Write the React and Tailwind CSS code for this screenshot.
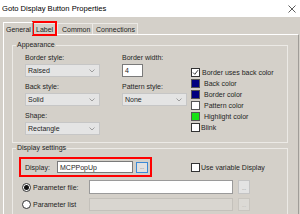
import React from "react"

const Chevron = () => (
  <svg width="6" height="4" viewBox="0 0 6 4" className="shrink-0">
    <polyline points="0.5,0.5 3,3 5.5,0.5" fill="none" stroke="#8a8a8a" strokeWidth="0.8" />
  </svg>
)

const Combo = ({ value, width }) => (
  <div className={`${width} h-[13px] bg-[#e4e4e4] border border-[#c6c6c6] flex items-center justify-between pl-[2px] pr-[4px]`}>
    <span>{value}</span>
    <Chevron />
  </div>
)

const Field = ({ label, children }) => (
  <div className="flex flex-col">
    <div className="h-[10px] flex items-center">{label}</div>
    <div className="mt-[2px]">{children}</div>
  </div>
)

const CheckBox = ({ checked }) => (
  <div className="w-[9px] h-[9px] bg-white border border-[#333] flex items-center justify-center shrink-0">
    {checked && (
      <svg width="7" height="7" viewBox="0 0 7 7">
        <polyline points="1,3.5 2.8,5.3 6,1.2" fill="none" stroke="#222" strokeWidth="0.9" />
      </svg>
    )}
  </div>
)

const Swatch = ({ color }) => (
  <div className={`w-[9px] h-[9px] border border-[#555] shrink-0 ${color}`} />
)

const Radio = ({ checked }) => (
  <div className="w-[9px] h-[9px] rounded-full bg-white border border-[#333] flex items-center justify-center shrink-0">
    {checked && <div className="w-[5px] h-[5px] rounded-full bg-[#111]" />}
  </div>
)

const Browse = ({ variant }) => {
  const styles =
    variant === "active"
      ? "bg-[#e1e1e1] border-[#3c8ad6] text-[#555]"
      : variant === "disabled"
        ? "bg-[#dcdad5] border-[#c9c6c0] text-[#aaa]"
        : "bg-[#e3e3e3] border-[#c4c4c4] text-[#777]"
  return (
    <div className={`w-[12px] border flex items-end justify-center pb-[2px] text-[5px] leading-none ${styles}`}>
      ...
    </div>
  )
}

const colorRows = [
  { label: "Back color", color: "bg-[#000080]" },
  { label: "Border color", color: "bg-[#000080]" },
  { label: "Pattern color", color: "bg-white" },
  { label: "Highlight color", color: "bg-[#16e016]" },
]

const tabs = ["Label", "Common", "Connections"]

export default function App() {
  return (
    <div className="w-[300px] h-[214px] overflow-hidden bg-[#d4d0c9] font-['Liberation_Sans',Arial,sans-serif] text-[7px] leading-none text-[#1e1e1e]">
      {/* Title bar */}
      <div className="h-[17px] bg-white flex items-center justify-between pl-[2px] pr-[4px]">
        <span className="text-[7.6px] text-black">Goto Display Button Properties</span>
        <svg width="8" height="8" viewBox="0 0 8 8">
          <path d="M0.5 0.5 L7.5 7.5 M7.5 0.5 L0.5 7.5" stroke="#333" strokeWidth="0.8" />
        </svg>
      </div>

      {/* Tabs */}
      <div className="h-[17px] flex items-end pl-[3px]">
        <div className="w-[30px] h-[13px] -mb-px z-10 bg-[#d4d0c9] border-t border-l border-white border-r border-r-[#8c8c8c] flex items-center pl-[2px]">
          General
        </div>
        {tabs.map((t, i) => (
          <div
            key={t}
            className={`relative h-[11px] flex items-center border-t border-r border-[#ebe9e5] ${
              i === 0 ? "w-[25px] pl-[3px]" : i === 1 ? "w-[35px] pl-[4px]" : "w-[45px] pl-[3px]"
            }`}
          >
            {t}
            {i === 0 && (
              <div className="absolute left-[-1px] top-[-3px] w-[25px] h-[15px] border-2 border-[#ff0000]" />
            )}
          </div>
        ))}
      </div>

      {/* Panel */}
      <div className="ml-[3px] w-[296px] h-[190px] border-t border-l border-white border-r border-r-[#a09d98] pl-[8px] pt-[6px]">
        {/* Appearance */}
        <fieldset className="w-[276px] h-[102px] border border-[#eceae6]">
          <legend className="ml-[3px] px-[1px] h-[8px] leading-[8px]">Appearance</legend>
          <div className="flex pl-[12px] pt-[3px]">
            <div className="w-[97px] flex flex-col gap-[4px]">
              <Field label="Border style:">
                <Combo value="Raised" width="w-[75px]" />
              </Field>
              <Field label="Back style:">
                <Combo value="Solid" width="w-[75px]" />
              </Field>
              <Field label="Shape:">
                <Combo value="Rectangle" width="w-[75px]" />
              </Field>
            </div>
            <div className="w-[69px] flex flex-col gap-[4px]">
              <Field label="Border width:">
                <div className="w-[21px] h-[13px] bg-white border border-[#7a7a7a] flex items-center pl-[2px]">4</div>
              </Field>
              <Field label="Pattern style:">
                <Combo value="None" width="w-[65px]" />
              </Field>
            </div>
            <div className="flex flex-col pt-[15px]">
              <div className="h-[11px] flex items-center gap-[2px]">
                <CheckBox checked />
                <span>Border uses back color</span>
              </div>
              {colorRows.map((r) => (
                <div key={r.label} className="h-[11px] flex items-center gap-[4px]">
                  <Swatch color={r.color} />
                  <span>{r.label}</span>
                </div>
              ))}
              <div className="h-[11px] flex items-center gap-[1px]">
                <CheckBox />
                <span>Blink</span>
              </div>
            </div>
          </div>
        </fieldset>

        {/* Display settings */}
        <fieldset className="mt-[1px] w-[276px] h-[90px] border border-[#eceae6]">
          <legend className="ml-[3px] px-[1px] h-[8px] leading-[8px]">Display settings</legend>
          <div className="pl-[6px] pt-[5px] flex flex-col">
            <div className="flex items-center">
              <div className="w-[133px] h-[20px] border-2 border-[#ff0000] flex items-center pl-[4px]">
                <span className="w-[32px]">Display:</span>
                <div className="w-[76px] h-[12px] bg-white border border-[#7a7a7a] flex items-center pl-[2px]">MCPPopUp</div>
                <div className="ml-[3px] h-[11px] flex">
                  <Browse variant="active" />
                </div>
              </div>
              <div className="ml-[39px] flex items-center gap-[1px]">
                <CheckBox />
                <span>Use variable Display</span>
              </div>
            </div>
            <div className="mt-[3px] h-[14px] flex items-center pl-[3px]">
              <div className="w-[67px] flex items-center gap-[2px]">
                <Radio checked />
                <span>Parameter file:</span>
              </div>
              <div className="w-[144px] h-[14px] bg-white border border-[#9a9a9a]" />
              <div className="ml-[5px] h-[14px] flex">
                <Browse />
              </div>
            </div>
            <div className="mt-[4px] h-[13px] flex items-center pl-[3px]">
              <div className="w-[67px] flex items-center gap-[2px]">
                <Radio />
                <span>Parameter list</span>
              </div>
              <div className="w-[144px] h-[13px] bg-[#d9d6d0] border border-[#c4c1bb]" />
              <div className="ml-[5px] h-[13px] flex">
                <Browse variant="disabled" />
              </div>
            </div>
          </div>
        </fieldset>
      </div>
    </div>
  )
}
